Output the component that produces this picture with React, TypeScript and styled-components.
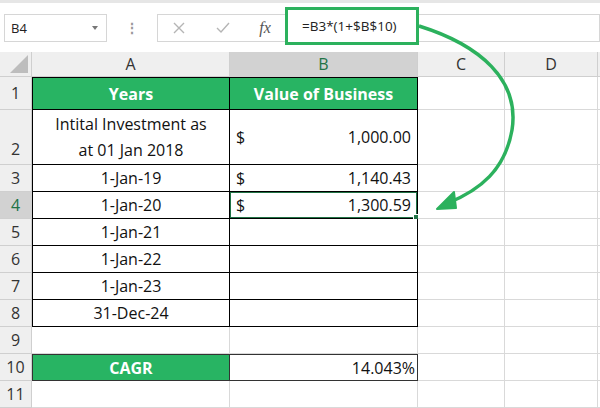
import React from 'react';
import styled, { createGlobalStyle } from 'styled-components';

const Global = createGlobalStyle`
  body { margin: 0; background: #fff; font-family: 'Open Sans', 'Noto Sans', sans-serif; }
`;

const Page = styled.div`
  position: relative;
  width: 600px;
  height: 408px;
  overflow: hidden;
  background: #fff;
`;

const FormulaBar = styled.div`
  height: 52px;
  display: flex;
  align-items: center;
  padding: 0 0 0 4px;
  background: #fff;
  border-top: 3px solid #e6e6e6;
  box-sizing: border-box;
`;

const NameBox = styled.div`
  width: 103px;
  height: 28px;
  border: 1px solid #d6d6d6;
  box-sizing: border-box;
  display: flex;
  align-items: center;
  justify-content: space-between;
  padding: 0 8px 0 6px;
  font-size: 13px;
  color: #222;
`;

const Caret = styled.span`
  width: 0; height: 0;
  border-left: 3px solid transparent;
  border-right: 3px solid transparent;
  border-top: 4px solid #777;
`;

const Dots = styled.div`
  width: 50px;
  text-align: center;
  color: #999;
  font-size: 14px;
  font-weight: bold;
  letter-spacing: 0;
`;

const Tools = styled.div`
  height: 28px;
  width: 128px;
  border: 1px solid #d6d6d6;
  border-right: none;
  box-sizing: border-box;
  display: flex;
  align-items: center;
  justify-content: space-around;
  color: #b0b0b0;
`;

const Fx = styled.span`
  font-family: 'Liberation Serif', serif;
  font-style: italic;
  color: #555;
  font-size: 16px;
`;

const FormulaBox = styled.div`
  height: 38px;
  width: 134px;
  border: 3px solid #2cb15d;
  box-sizing: border-box;
  display: flex;
  align-items: center;
  padding-left: 14px;
  font-size: 13.5px;
  color: #222;
  margin-top: -4px;
`;

const FormulaRest = styled.div`
  flex: 1;
  height: 28px;
  border: 1px solid #d6d6d6;
  border-left: none;
  box-sizing: border-box;
`;

const Grid = styled.div`
  display: grid;
  grid-template-columns: 32px 198px 188px 87px 93px 2px;
  grid-template-rows: 25px 33px 55px repeat(9, 27px);
  font-size: 16px;
  color: #111;
`;

const Cell = styled.div<{ $head?: boolean; $sel?: boolean; $align?: string; $green?: boolean; $box?: string }>`
  box-sizing: border-box;
  border-right: 1px solid #d9d9d9;
  border-bottom: 1px solid #d9d9d9;
  display: flex;
  align-items: center;
  justify-content: ${p => p.$align || 'center'};
  padding: 0 6px;
  text-align: center;
  line-height: 26px;
  position: relative;
  background: ${p => (p.$green ? '#28b463' : p.$head ? (p.$sel ? '#d2d2d2' : '#efefef') : '#fff')};
  color: ${p => (p.$green ? '#fff' : p.$head ? (p.$sel ? '#217346' : '#333') : '#111')};
  font-weight: ${p => (p.$green ? 700 : 400)};
  ${p => p.$box ? `box-shadow: inset 0 0 0 1px ${p.$box};` : ''}
  ${p => p.$head ? 'border-color: #cfcfcf;' : ''}
`;

const Corner = styled(Cell)`
  &::after {
    content: '';
    position: absolute;
    right: 3px; bottom: 3px;
    border-left: 18px solid transparent;
    border-bottom: 18px solid #bdbdbd;
  }
`;

const Money = styled.div`
  display: flex;
  justify-content: space-between;
  width: 100%;
`;

const Handle = styled.span`
  position: absolute;
  right: -4px; bottom: -4px;
  width: 6px; height: 6px;
  background: #217346;
  border: 1px solid #fff;
`;

const Arrow = styled.svg`
  position: absolute;
  left: 0; top: 0;
  pointer-events: none;
`;

const cols = ['A', 'B', 'C', 'D'];
const dates = ['1-Jan-19', '1-Jan-20', '1-Jan-21', '1-Jan-22', '1-Jan-23', '31-Dec-24'];
const values = ['1,140.43', '1,300.59'];

const black = '#000';

export default function App() {
  const rows: React.ReactNode[] = [];
  // header
  rows.push(<Corner key="c" $head />);
  cols.forEach(c => rows.push(<Cell key={c} $head $sel={c === 'B'}>{c}</Cell>));
  rows.push(<Cell key="e" $head />);

  const border = (cells: React.ReactNode[]) => cells;

  rows.push(<Cell key="r1" $head>1</Cell>);
  rows.push(<Cell key="a1" $green style={{ borderColor: black, borderLeft: `1px solid ${black}`, borderTop: `1px solid ${black}` }}>Years</Cell>);
  rows.push(<Cell key="b1" $green style={{ borderColor: black, borderTop: `1px solid ${black}` }}>Value of Business</Cell>);
  rows.push(<Cell key="c1" />, <Cell key="d1" />, <Cell key="e1" />);

  rows.push(<Cell key="r2" $head $align="center" style={{ alignItems: 'flex-end', paddingBottom: 2 }}>2</Cell>);
  rows.push(<Cell key="a2" style={{ borderColor: black, borderLeft: `1px solid ${black}` }}>Intital Investment as<br />at 01 Jan 2018</Cell>);
  rows.push(<Cell key="b2" style={{ borderColor: black }}><Money><span>$</span><span>1,000.00</span></Money></Cell>);
  rows.push(<Cell key="c2" />, <Cell key="d2" />, <Cell key="e2" />);

  dates.forEach((d, i) => {
    const r = i + 3;
    rows.push(<Cell key={'r' + r} $head $sel={r === 4}>{r}</Cell>);
    rows.push(<Cell key={'a' + r} style={{ borderColor: black, borderLeft: `1px solid ${black}` }}>{d}</Cell>);
    rows.push(
      <Cell key={'b' + r} $box={r === 4 ? '#217346' : undefined} style={{ borderColor: black }}>
        {values[i] && <Money><span>$</span><span>{values[i]}</span></Money>}
        {r === 4 && <Handle />}
      </Cell>
    );
    rows.push(<Cell key={'c' + r} />, <Cell key={'d' + r} />, <Cell key={'e' + r} />);
  });

  rows.push(<Cell key="r9" $head>9</Cell>, <Cell key="a9" />, <Cell key="b9" />, <Cell key="c9" />, <Cell key="d9" />, <Cell key="e9" />);
  rows.push(<Cell key="r10" $head>10</Cell>);
  rows.push(<Cell key="a10" $green style={{ borderColor: '#333', borderLeft: '1px solid #333', borderTop: '1px solid #333' }}>CAGR</Cell>);
  rows.push(<Cell key="b10" $align="flex-end" style={{ borderColor: '#333', borderTop: '1px solid #333', paddingRight: 2 }}>14.043%</Cell>);
  rows.push(<Cell key="c10" />, <Cell key="d10" />, <Cell key="e10" />);
  rows.push(<Cell key="r11" $head>11</Cell>, <Cell key="a11" />, <Cell key="b11" />, <Cell key="c11" />, <Cell key="d11" />, <Cell key="e11" />);

  return (
    <Page>
      <Global />
      <FormulaBar>
        <NameBox>B4<Caret /></NameBox>
        <Dots>⋮</Dots>
        <Tools>
          <svg width="14" height="14" viewBox="0 0 14 14"><path d="M2 2L12 12M12 2L2 12" stroke="#b5b5b5" strokeWidth="1.4" /></svg>
          <svg width="16" height="14" viewBox="0 0 16 14"><path d="M2 7L6 11L14 2" stroke="#b5b5b5" strokeWidth="1.4" fill="none" /></svg>
          <Fx>fx</Fx>
        </Tools>
        <FormulaBox>=B3*(1+$B$10)</FormulaBox>
        <FormulaRest />
      </FormulaBar>
      <Grid>{border(rows)}</Grid>
      <Arrow width="600" height="408" viewBox="0 0 600 408">
        <path d="M419 26 C 480 45, 520 80, 512 130 C 505 170, 480 190, 448 203" stroke="#2cb15d" strokeWidth="3.5" fill="none" />
        <path d="M437 209 L454 192 L456 208 Z" fill="#2cb15d" stroke="#2cb15d" strokeWidth="2" strokeLinejoin="round" />
      </Arrow>
    </Page>
  );
}
